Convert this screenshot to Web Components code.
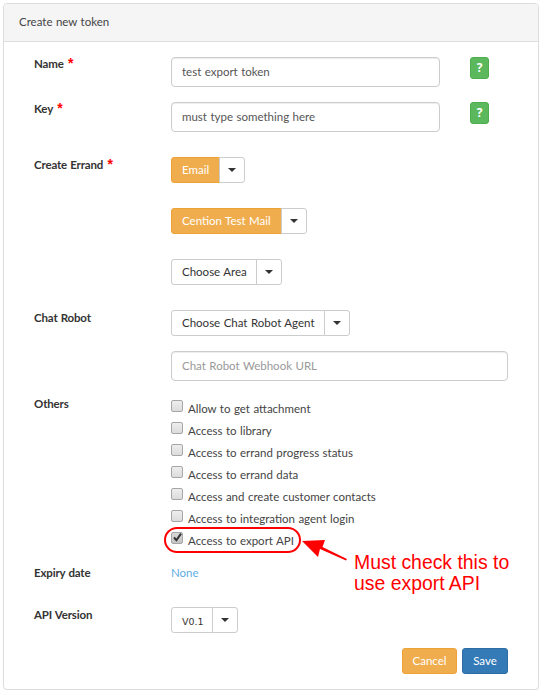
<!DOCTYPE html>
<html>
<head>
<meta charset="utf-8">
<title>Create new token</title>
<style>
    html, body { margin: 0; padding: 0; background: #fff; }
    body { font-family: Lato, "Open Sans", sans-serif; font-size: 11.5px; word-spacing: .5px; color: #333; }
</style>
</head>
<body>
<token-panel>
    <span slot="title">Create new token</span>

    <form-row label="Name" required offset="-1" style="margin-bottom:15px">
        <div style="display:flex;gap:30px;align-items:flex-start">
            <text-field width="269" value="test export token"></text-field>
            <help-button></help-button>
        </div>
    </form-row>
    <form-row label="Key" required offset="-1" style="margin-bottom:25px">
        <div style="display:flex;gap:30px;align-items:flex-start">
            <text-field width="269" value="must type something here"></text-field>
            <help-button></help-button>
        </div>
    </form-row>
    <form-row label="Create Errand" required style="margin-bottom:25px">
        <split-button kind="warning" main="49">Email</split-button>
    </form-row>
    <form-row style="margin-bottom:25px">
        <split-button kind="warning" main="111">Cention Test Mail</split-button>
    </form-row>
    <form-row style="margin-bottom:25px">
        <split-button main="86">Choose Area</split-button>
    </form-row>
    <form-row label="Chat Robot" style="margin-bottom:15px">
        <split-button main="154">Choose Chat Robot Agent</split-button>
    </form-row>
    <form-row style="margin-bottom:17px">
        <text-field width="337" placeholder="Chat Robot Webhook URL"></text-field>
    </form-row>
    <form-row label="Others" offset="-2" style="margin-bottom:14px">
        <check-item>Allow to get attachment</check-item>
        <check-item>Access to library</check-item>
        <check-item>Access to errand progress status</check-item>
        <check-item>Access to errand data</check-item>
        <check-item>Access and create customer contacts</check-item>
        <check-item>Access to integration agent login</check-item>
        <check-item checked>Access to export API</check-item>
    </form-row>
    <form-row label="Expiry date" offset="-1" style="margin-bottom:27px">
        <a style="color:#5dade2;display:block;line-height:13px">None</a>
    </form-row>
    <form-row label="API Version" style="margin-bottom:15px">
        <split-button main="42"><span style="font-family:'DejaVu Sans',sans-serif;font-size:9.5px;vertical-align:-1px">V0.1</span></split-button>
    </form-row>

    <div slot="footer" style="display:flex;justify-content:flex-end;gap:5px">
        <action-button kind="warning" width="55">Cancel</action-button>
        <action-button kind="primary" width="46">Save</action-button>
    </div>

    <export-callout slot="overlay"></export-callout>
</token-panel>

<template id="token-panel">
    <style>
        :host { display: block; position: relative; box-sizing: border-box; width: 536px; height: 687px; margin: 3px 0 0 3px; border: 1px solid #ddd; border-radius: 4px; box-shadow: 0 1px 1px rgba(0,0,0,.05); background: #fff; }
        .heading { box-sizing: border-box; height: 38px; padding: 0 15px; line-height: 35px; background: #f5f5f5; border-bottom: 1px solid #ddd; border-radius: 3px 3px 0 0; color: #444; }
        .body { padding: 15px 30px 0 30px; }
        .footer { padding-right: 30px; }
    </style>
    <div class="heading"><slot name="title"></slot></div>
    <div class="body"><slot></slot></div>
    <div class="footer"><slot name="footer"></slot></div>
    <slot name="overlay"></slot>
</template>

<template id="form-row">
    <style>
        :host { display: grid; grid-template-columns: 137px 1fr; }
        .label { font-weight: 700; color: #333; line-height: 15px; letter-spacing: -.15px; }
        .req { color: #f00; font-family: "Liberation Sans", sans-serif; font-size: 14px; line-height: 0; }
    </style>
    <div class="label"><span class="text"></span><span class="req"></span></div>
    <div><slot></slot></div>
</template>

<template id="text-field">
    <style>
        :host { display: block; flex: none; }
        input { display: block; box-sizing: border-box; height: 30px; padding: 5px 10px 7px; border: 1px solid #ccc; border-radius: 4px; box-shadow: inset 0 1px 1px rgba(0,0,0,.075); font: inherit; word-spacing: .5px; color: #555; background: #fff; outline: none; }
        input::placeholder { color: #999; opacity: 1; }
    </style>
    <input type="text">
</template>

<template id="help-button">
    <style>
        :host { display: block; flex: none; }
        div { box-sizing: border-box; width: 19px; height: 22px; line-height: 19px; text-align: center; background: #5cb85c; border: 1px solid #4cae4c; border-radius: 3px; color: #fff; font-family: "Open Sans", sans-serif; font-weight: 700; font-size: 12px; }
    </style>
    <div>?</div>
</template>

<template id="split-button">
    <style>
        :host { display: inline-flex; vertical-align: top; }
        .main, .caret { box-sizing: border-box; height: 26px; border: 1px solid #ccc; background: #fff; color: #333; line-height: 24px; }
        .main { padding: 0 10px; border-radius: 3px 0 0 3px; white-space: nowrap; text-align: left; }
        .caret { width: 26px; margin-left: -1px; border-radius: 0 3px 3px 0; display: flex; align-items: center; justify-content: center; }
        .caret i { width: 0; height: 0; border-top: 4px solid #333; border-left: 4px solid transparent; border-right: 4px solid transparent; }
        :host([kind="warning"]) .main { background: #f0ad4e; border-color: #eea236; color: #fff; }
    </style>
    <div class="main"><slot></slot></div>
    <div class="caret"><i></i></div>
</template>

<template id="check-item">
    <style>
        :host { display: flex; height: 22px; align-items: flex-start; }
        .box { box-sizing: border-box; flex: none; width: 12px; height: 12px; margin: 2px 5px 0 0; border: 1px solid #a6a6a6; border-radius: 2px; background: linear-gradient(#ededed, #dcdcdc); position: relative; }
        :host([checked]) .box { background: linear-gradient(#d8d8d8, #c4c4c4); }
        svg { position: absolute; left: 0; top: -1px; display: none; }
        :host([checked]) svg { display: block; }
        .text { line-height: 17px; margin-top: 2px; color: #444; }
    </style>
    <div class="box"><svg width="11" height="11" viewBox="0 0 11 11"><path d="M2 5.5 L4.4 8.2 L9 1.6" fill="none" stroke="#333" stroke-width="2"/></svg></div>
    <div class="text"><slot></slot></div>
</template>

<template id="action-button">
    <style>
        :host { display: block; }
        div { box-sizing: border-box; height: 26px; line-height: 23px; text-align: center; border: 1px solid; border-radius: 3px; color: #fff; }
        :host([kind="warning"]) div { background: #f0ad4e; border-color: #eea236; }
        :host([kind="primary"]) div { background: #337ab7; border-color: #2e6da4; }
    </style>
    <div><slot></slot></div>
</template>

<template id="export-callout">
    <style>
        :host { display: block; position: absolute; left: 0; top: 0; pointer-events: none; }
        .oval { position: absolute; left: 160px; top: 523px; width: 137px; height: 26px; box-sizing: border-box; border: 2px solid #f00; border-radius: 13px; }
        svg { position: absolute; left: 295px; top: 530px; }
        .note { position: absolute; left: 350px; top: 548px; width: 180px; font-family: "Liberation Sans", Arial, sans-serif; font-size: 19.4px; word-spacing: 0; line-height: 21px; color: #f00; }
    </style>
    <div class="oval"></div>
    <svg width="50" height="30" viewBox="0 0 50 30"><path d="M3 7 L26 6 L23.5 13 L48 25 L47 26.5 L21 15 L19 23 Z" fill="#f00"/></svg>
    <div class="note">Must check this to<br>use export API</div>
</template>

<script>
    // template clone helper
    function attachFrom(el, id) {
        var root = el.attachShadow({mode: 'open'});
        root.appendChild(document.getElementById(id).content.cloneNode(true));
        return root;
    }

    class TokenPanel extends HTMLElement {
        constructor() { super(); attachFrom(this, 'token-panel'); }
    }

    class FormRow extends HTMLElement {
        constructor() { super(); this.root = attachFrom(this, 'form-row'); }
        connectedCallback() {
            this.root.querySelector('.text').textContent = this.getAttribute('label') || '';
            if (this.hasAttribute('required')) this.root.querySelector('.req').textContent = ' *';
            var offset = this.getAttribute('offset');
            if (offset) this.root.querySelector('.label').style.marginTop = offset + 'px';
        }
    }

    class TextField extends HTMLElement {
        constructor() { super(); this.root = attachFrom(this, 'text-field'); }
        connectedCallback() {
            var input = this.root.querySelector('input');
            input.style.width = this.getAttribute('width') + 'px';
            if (this.hasAttribute('value')) input.setAttribute('value', this.getAttribute('value'));
            if (this.hasAttribute('placeholder')) input.placeholder = this.getAttribute('placeholder');
        }
    }

    class HelpButton extends HTMLElement {
        constructor() { super(); attachFrom(this, 'help-button'); }
    }

    class SplitButton extends HTMLElement {
        constructor() { super(); this.root = attachFrom(this, 'split-button'); }
        connectedCallback() {
            this.root.querySelector('.main').style.width = this.getAttribute('main') + 'px';
        }
    }

    class CheckItem extends HTMLElement {
        constructor() { super(); attachFrom(this, 'check-item'); }
    }

    class ActionButton extends HTMLElement {
        constructor() { super(); this.root = attachFrom(this, 'action-button'); }
        connectedCallback() {
            this.root.querySelector('div').style.width = this.getAttribute('width') + 'px';
        }
    }

    class ExportCallout extends HTMLElement {
        constructor() { super(); attachFrom(this, 'export-callout'); }
    }

    customElements.define('token-panel', TokenPanel);
    customElements.define('form-row', FormRow);
    customElements.define('text-field', TextField);
    customElements.define('help-button', HelpButton);
    customElements.define('split-button', SplitButton);
    customElements.define('check-item', CheckItem);
    customElements.define('action-button', ActionButton);
    customElements.define('export-callout', ExportCallout);
</script>
</body>
</html>
